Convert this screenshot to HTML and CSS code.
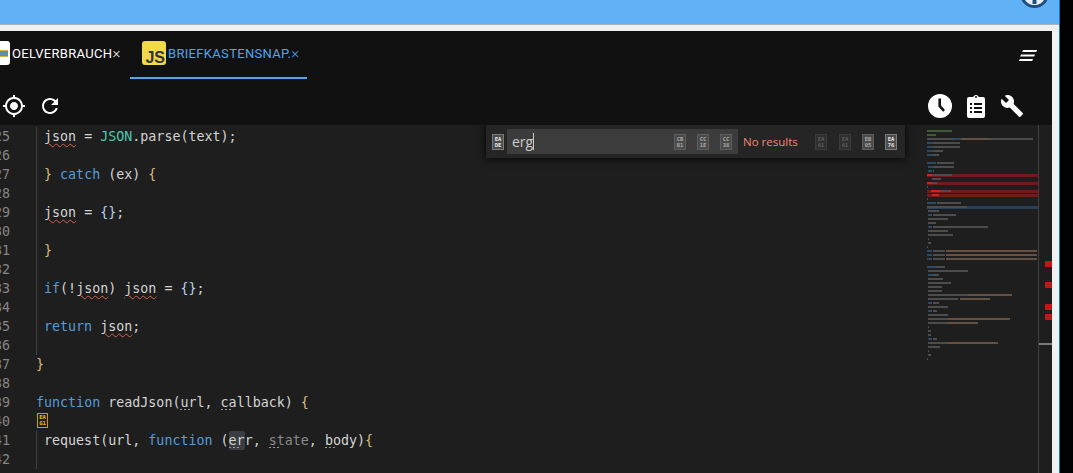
FILE: index.html
```html
<!DOCTYPE html>
<html lang="de">
<head>
<meta charset="utf-8">
<title>Editor</title>
<link rel="stylesheet" href="styles.css">
</head>
<body>
<div class="app">
  <header class="topbar">
    <svg class="avatar" viewBox="0 0 29 29" width="29" height="29"><circle cx="14.5" cy="14.5" r="14.5" fill="#1d4f80"/><circle cx="14.5" cy="14.5" r="11.5" fill="#e8f0f6"/><rect x="12.5" y="20" width="4" height="5" fill="#1d4f80"/></svg>
  </header>
  <div class="panel">
    <div class="tabs">
      <div class="tab">
        <span class="tabicon white"><span class="strip"></span></span>
        <span class="tabname">OELVERBRAUCH</span><span class="tabx">×</span>
      </div>
      <div class="tab active">
        <span class="tabicon js">JS</span>
        <span class="tabname">BRIEFKASTENSNAP.</span><span class="tabx">×</span>
      </div>
      <svg class="menu" viewBox="0 0 18 11" width="18" height="11"><polygon points="4,0 18,0 17.2,2 3.2,2"/><polygon points="2,4.5 16,4.5 15.2,6.5 1.2,6.5"/><polygon points="0.8,9 14,9 13.2,11 0,11"/></svg>
    </div>
    <div class="toolbar">
      <svg class="tool" viewBox="0 0 24 24" width="24" height="24"><path d="M12 8c-2.21 0-4 1.79-4 4s1.79 4 4 4 4-1.79 4-4-1.79-4-4-4zm8.94 3c-.46-4.17-3.77-7.48-7.94-7.94V1h-2v2.06C6.83 3.52 3.52 6.83 3.06 11H1v2h2.06c.46 4.17 3.77 7.48 7.94 7.94V23h2v-2.06c4.17-.46 7.48-3.77 7.94-7.94H23v-2h-2.06zM12 19c-3.87 0-7-3.13-7-7s3.13-7 7-7 7 3.13 7 7-3.13 7-7 7z"/></svg>
      <svg class="tool" viewBox="0 0 24 24" width="24" height="24"><path d="M17.65 6.35C16.2 4.9 14.21 4 12 4c-4.42 0-7.99 3.58-7.99 8s3.57 8 7.99 8c3.73 0 6.84-2.55 7.73-6h-2.08c-.82 2.33-3.04 4-5.65 4-3.31 0-6-2.69-6-6s2.69-6 6-6c1.66 0 3.14.69 4.22 1.78L13 11h7V4l-2.35 2.35z"/></svg>
      <span class="spacer"></span>
      <svg class="tool" viewBox="0 0 24 24" width="24" height="24"><path fill-rule="evenodd" d="M12 0a12 12 0 1 0 0 24 12 12 0 0 0 0-24zM10.4 4.5h2.6v7l4 4.4-1.9 1.8-4.7-5.2z"/></svg>
      <svg class="tool" viewBox="0 0 24 24" width="24" height="24"><path fill-rule="evenodd" d="M5 3h4.2a3 3 0 0 1 5.6 0H19a2 2 0 0 1 2 2v17a2 2 0 0 1-2 2H5a2 2 0 0 1-2-2V5a2 2 0 0 1 2-2zm7-1a1 1 0 1 0 0 2 1 1 0 0 0 0-2zM6 9v2h2V9zm4 0v2h8V9zm-4 4v2h2v-2zm4 0v2h8v-2zm-4 4v2h2v-2zm4 0v2h8v-2z"/></svg>
      <svg class="tool" viewBox="0 0 24 24" width="24" height="24"><path d="M22.7 19l-9.1-9.1c.9-2.3.4-5-1.5-6.9-2-2-5-2.4-7.4-1.3L9 6 6 9 1.6 4.7C.4 7.1.9 10.1 2.9 12.1c1.9 1.9 4.6 2.4 6.9 1.5l9.1 9.1c.4.4 1 .4 1.4 0l2.3-2.3c.5-.4.5-1.1.1-1.4z"/></svg>
    </div>
    <div class="editor">
      <div class="gutter">
        <div>25</div><div>26</div><div>27</div><div>28</div><div>29</div><div>30</div>
        <div>31</div><div>32</div><div>33</div><div>34</div><div>35</div><div>36</div>
        <div>37</div><div>38</div><div>39</div><div>40</div><div>41</div><div>42</div>
      </div>
      <div class="code">
        <div class="ind">
          <div class="ln"><span class="sq">json</span> = <span class="ty">JSON</span>.parse(text);</div>
          <div class="ln"></div>
          <div class="ln"><span class="br">}</span> <span class="kw">catch</span> (ex) <span class="br">{</span></div>
          <div class="ln"></div>
          <div class="ln"><span class="sq">json</span> = <span class="br2">{}</span>;</div>
          <div class="ln"></div>
          <div class="ln"><span class="br">}</span></div>
          <div class="ln"></div>
          <div class="ln"><span class="kw">if</span>(!<span class="sq">json</span>) <span class="sq">json</span> = <span class="br2">{}</span>;</div>
          <div class="ln"></div>
          <div class="ln"><span class="kw">return</span> <span class="sq">json</span>;</div>
          <div class="ln"></div>
        </div>
        <div class="ln"><span class="br">}</span></div>
        <div class="ln"></div>
        <div class="ln"><span class="kw">function</span> readJson(<span class="dot">url</span>, <span class="dot">callback</span>) <span class="br">{</span></div>
        <div class="ln"><span class="tofu gold">EA<br>G1</span></div>
        <div class="ind">
          <div class="ln">request(url, <span class="kw">function</span> (<span class="dot hl">er</span>r, <span class="dot dim">state</span>, <span class="dot">body</span>)<span class="br">{</span></div>
          <div class="ln"></div>
        </div>
      </div>
      <div class="minimap">
        <svg viewBox="0 0 120 240" width="120" height="240">
          <g class="mred"><rect x="9" y="47" width="111" height="3"/><rect x="9" y="55" width="111" height="3"/><rect x="9" y="63" width="111" height="3"/><rect x="9" y="67" width="111" height="3"/></g>
          <rect class="mblue" x="9" y="79" width="111" height="3"/>
          <g class="mbright"><rect x="9" y="47" width="5" height="2"/><rect x="9" y="55" width="5" height="2"/><rect x="13" y="63" width="10" height="2"/><rect x="28" y="63" width="5" height="2"/><rect x="14" y="67" width="7" height="2"/></g>
          <g class="mgreen"><rect x="9" y="3" width="25" height="2"/><rect x="9" y="7" width="9" height="2"/></g>
          <g class="mtext">
            <rect x="9" y="11" width="106" height="2"/><rect x="15" y="15" width="27" height="2"/><rect x="15" y="19" width="27" height="2"/><rect x="15" y="23" width="10" height="2"/><rect x="15" y="27" width="6" height="2"/>
            <rect x="19" y="35" width="17" height="2"/><rect x="15" y="39" width="21" height="2"/><rect x="15" y="43" width="1" height="2"/><rect x="14" y="47" width="20" height="2"/><rect x="14" y="51" width="9" height="2"/><rect x="14" y="55" width="5" height="2"/><rect x="9" y="59" width="1" height="2"/><rect x="22" y="63" width="10" height="2"/><rect x="9" y="71" width="1" height="2"/>
            <rect x="19" y="75" width="24" height="2"/><rect x="9" y="79" width="40" height="2"/><rect x="10" y="83" width="11" height="2"/><rect x="15" y="87" width="23" height="2"/><rect x="10" y="91" width="20" height="2"/><rect x="10" y="95" width="8" height="2"/><rect x="15" y="99" width="55" height="2"/><rect x="10" y="103" width="20" height="2"/><rect x="10" y="107" width="25" height="2"/><rect x="10" y="111" width="1" height="2"/><rect x="10" y="115" width="3" height="2"/><rect x="9" y="119" width="1" height="2"/>
            <rect x="15" y="123" width="12" height="2"/><rect x="15" y="127" width="12" height="2"/><rect x="15" y="131" width="12" height="2"/>
            <rect x="15" y="139" width="12" height="2"/><rect x="10" y="143" width="40" height="2"/><rect x="15" y="147" width="6" height="2"/><rect x="10" y="151" width="15" height="2"/><rect x="10" y="155" width="23" height="2"/><rect x="10" y="159" width="14" height="2"/><rect x="10" y="163" width="14" height="2"/><rect x="10" y="167" width="40" height="2"/><rect x="10" y="171" width="30" height="2"/><rect x="15" y="175" width="6" height="2"/><rect x="10" y="179" width="20" height="2"/><rect x="15" y="183" width="4" height="2"/><rect x="10" y="187" width="20" height="2"/><rect x="10" y="191" width="60" height="2"/><rect x="10" y="195" width="30" height="2"/><rect x="10" y="199" width="1" height="2"/><rect x="10" y="203" width="3" height="2"/><rect x="10" y="207" width="3" height="2"/><rect x="15" y="211" width="4" height="2"/><rect x="10" y="215" width="20" height="2"/><rect x="10" y="219" width="12" height="2"/><rect x="10" y="223" width="1" height="2"/><rect x="10" y="227" width="3" height="2"/><rect x="9" y="231" width="1" height="2"/>
          </g>
          <g class="mkw"><rect x="9" y="15" width="6" height="2"/><rect x="9" y="19" width="6" height="2"/><rect x="9" y="23" width="6" height="2"/><rect x="9" y="27" width="6" height="2"/><rect x="9" y="35" width="9" height="2"/><rect x="10" y="39" width="5" height="2"/><rect x="10" y="43" width="4" height="2"/><rect x="9" y="75" width="9" height="2"/><rect x="10" y="87" width="4" height="2"/><rect x="10" y="99" width="4" height="2"/><rect x="9" y="123" width="5" height="2"/><rect x="9" y="127" width="5" height="2"/><rect x="9" y="131" width="5" height="2"/><rect x="9" y="139" width="9" height="2"/><rect x="10" y="147" width="5" height="2"/><rect x="10" y="175" width="4" height="2"/><rect x="10" y="183" width="4" height="2"/><rect x="10" y="211" width="4" height="2"/><rect x="35" y="11" width="8" height="2"/></g>
          <g class="mstr"><rect x="28" y="123" width="91" height="2"/><rect x="28" y="127" width="91" height="2"/><rect x="28" y="131" width="91" height="2"/><rect x="43" y="11" width="28" height="2"/><rect x="50" y="167" width="44" height="2"/><rect x="42" y="171" width="30" height="2"/><rect x="30" y="191" width="62" height="2"/><rect x="30" y="195" width="30" height="2"/><rect x="30" y="215" width="50" height="2"/></g>
        </svg>
      </div>
      <div class="ruler">
        <span class="mark m1"></span>
        <span class="mark m2"></span>
        <span class="mark m3"></span>
        <span class="mark m4"></span>
        <span class="thumb"></span>
      </div>
      <div class="find">
        <span class="tofu">EA<br>DE</span>
        <div class="findinput">
          <span class="query">erg</span><span class="caret"></span>
          <span class="spacer"></span>
          <span class="tofu soft">CB<br>B1</span>
          <span class="tofu soft">CC<br>1E</span>
          <span class="tofu soft">CC<br>38</span>
        </div>
        <span class="noresults">No results</span>
        <span class="spacer"></span>
        <span class="tofu off">EA<br>A1</span>
        <span class="tofu off">EA<br>A1</span>
        <span class="tofu soft">EB<br>05</span>
        <span class="tofu">EA<br>76</span>
      </div>
    </div>
  </div>
</div>
</body>
</html>
```
FILE: styles.css
```css
* { box-sizing: border-box; }
html, body { margin: 0; height: 473px; overflow: hidden; background: #000; }
.app {
  width: 1060px;
  height: 473px;
  display: flex;
  flex-direction: column;
  border-right: 1px solid #0f7ad8;
  background: #f0f0f0;
  overflow: hidden;
  font-family: "Liberation Sans", sans-serif;
}
.topbar {
  height: 25px;
  flex: none;
  display: flex;
  justify-content: flex-end;
  padding-right: 10px;
  background: #60b1f6;
  border-bottom: 1px solid #a9b4bd;
  overflow: hidden;
}
.avatar { margin-top: -21px; flex: none; }
.panel {
  flex: 1;
  min-height: 0;
  margin: 6px 7px 0 0;
  background: #111;
  display: flex;
  flex-direction: column;
}
.tabs {
  height: 48px;
  flex: none;
  display: flex;
  align-items: stretch;
  margin-left: -26px;
}
.tab {
  display: flex;
  align-items: center;
  width: 156px;
  padding: 0 0 4px 12px;
  font-family: Roboto, sans-serif;
  font-size: 13px;
  letter-spacing: 0.32px;
  color: #fff;
}
.tab.active {
  width: 177px;
  color: #4da6f2;
  border-bottom: 2px solid #4da6f2;
  padding-bottom: 2px;
}
.tabicon {
  width: 24px;
  height: 24px;
  flex: none;
  margin-right: 2px;
  border-radius: 3px;
  position: relative;
  display: flex;
  align-items: flex-end;
  justify-content: flex-end;
}
.tabicon.white { background: #fff; }
.strip {
  position: absolute;
  left: 0;
  right: 2px;
  top: 9px;
  height: 7px;
  background: #5b8fb0;
  border-top: 1px solid #d8b24a;
  border-bottom: 1px solid #d8b24a;
}
.tabicon.js {
  background: #f0d94a;
  color: #333;
  font-family: "Liberation Sans", sans-serif;
  font-weight: bold;
  font-size: 16px;
  letter-spacing: 0;
  line-height: 15px;
  padding-right: 1px;
}
.tabname { white-space: nowrap; margin-top: 1px; }
.tabx { font-size: 15px; font-weight: 300; line-height: 13px; width: 8px; text-align: center; flex: none; }
.menu { fill: #fff; align-self: center; margin: 0 0 0 712px; flex: none; }
.toolbar {
  height: 46px;
  flex: none;
  display: flex;
  align-items: center;
  padding: 8px 28px 0 2px;
  gap: 12px;
  fill: #fff;
}
.tool { flex: none; }
.spacer { flex: 1; }
.editor {
  flex: 1;
  min-height: 0;
  display: flex;
  position: relative;
  background: #1e1e1e;
  padding-top: 2px;
  overflow: hidden;
  font-family: "DejaVu Sans Mono", monospace;
  font-size: 13.33px;
  color: #d4d4d4;
}
.gutter {
  width: 18px;
  margin-left: -8px;
  margin-right: 26px;
  flex: none;
  text-align: right;
  color: #858585;
  line-height: 19px;
}
.code { flex: 1; min-width: 0; }
.ln { height: 19px; line-height: 19px; white-space: pre; }
.ind { border-left: 1px solid #404040; padding-left: 7px; }
.kw { color: #569cd6; }
.ty { color: #4ec9b0; }
.br { color: #d7ba7d; }
.br2 { color: #b9d0e8; }
.sq { text-decoration: underline wavy #d5604e 1px; text-underline-offset: 2px; }
.dot {
  background: repeating-linear-gradient(90deg, #9a9a9a 0 2px, transparent 2px 4px) 0 100% / 10px 1px no-repeat;
}
.dim { color: #8a8a8a; }
.hl {
  background-color: #3a3d41;
  background-origin: content-box;
  border-radius: 2px;
  padding: 2px 0;
}
.minimap { width: 120px; flex: none; overflow: hidden; }
.minimap svg { display: block; filter: blur(0.5px); }
.mtext { fill: #4c4c4c; }
.mkw { fill: #2a4a66; }
.mstr { fill: #66503f; }
.mgreen { fill: #3f5a38; }
.mred { fill: #701a1a; }
.mblue { fill: #25405a; }
.mbright { fill: #d81e1e; }
.ruler {
  width: 14px;
  flex: none;
  position: relative;
  border-left: 1px solid #404040;
  margin-top: -2px;
}
.mark { position: absolute; right: 0; width: 7px; height: 6px; background: #c01818; }
.m1 { top: 136px; }
.m2 { top: 157px; }
.m3 { top: 179px; }
.m4 { top: 189px; }
.thumb { position: absolute; left: 0; right: 0; top: 218px; height: 2px; background: #7a7a7a; }
.find {
  position: absolute;
  left: 486px;
  top: 0;
  width: 419px;
  height: 33px;
  display: flex;
  align-items: center;
  padding: 0 8px 0 6px;
  background: #252526;
  box-shadow: 0 0 8px #000;
  font-family: "Open Sans", sans-serif;
  font-size: 14px;
}
.findinput {
  width: 231px;
  height: 25px;
  margin-left: 3px;
  display: flex;
  align-items: center;
  padding: 0 6px 0 5px;
  background: #3c3c3c;
  color: #ccc;
}
.caret { width: 1px; height: 17px; background: #ccc; }
.findinput .tofu { margin-left: 11px; }
.noresults { margin-left: 5px; font-size: 11.5px; color: #f48771; white-space: nowrap; flex: none; }
.find > .off { margin-left: 12px; }
.find > .soft, .find > .tofu:last-child { margin-left: 11px; }
.tofu {
  display: inline-block;
  width: 12px;
  height: 16px;
  flex: none;
  padding-top: 1px;
  background: #4c4c4c;
  border: 1px solid #7a7a7a;
  color: #e4e4e4;
  font-family: "DejaVu Sans Mono", monospace;
  font-weight: bold;
  font-size: 5.5px;
  line-height: 6.5px;
  text-align: center;
  vertical-align: top;
}
.tofu.soft { background: #4a4a4a; border-color: #5e5e5e; color: #a8a8a8; }
.tofu.off { background: #2e2e2e; border-color: #3c3c3c; color: #5c5c5c; }
.tofu.gold {
  width: 11px;
  height: 15px;
  margin: 1px 0 0 1px;
  background: #1e1e1e;
  border: 1px solid #c9a000;
  color: #e8c000;
  padding-top: 0;
  line-height: 6px;
  font-size: 5.5px;
}
```
